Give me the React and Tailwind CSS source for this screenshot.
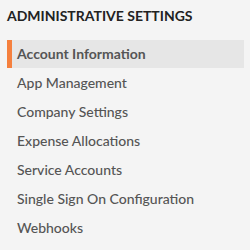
import React from 'react';

const items = [
  'Account Information',
  'App Management',
  'Company Settings',
  'Expense Allocations',
  'Service Accounts',
  'Single Sign On Configuration',
  'Webhooks',
];

export default function App() {
  const active = 0;

  return (
    <div className="w-[250px] h-[250px] bg-[#f4f4f4] pl-[7px] pr-[6px] pt-[8px] font-['Lato',sans-serif] overflow-hidden">
      <h2 className="text-[14px] leading-[16px] font-bold text-[#222] uppercase">
        Administrative Settings
      </h2>
      <ul className="mt-[16px]">
        {items.map((label, i) => {
          const isActive = i === active;
          return (
            <li
              key={label}
              className={
                isActive
                  ? 'h-[28px] mb-[1px] pb-[2px] flex items-center bg-[#e6e6e6] border-l-[5px] border-[#f5803e] pl-[5px] text-[14px] font-bold text-[#555]'
                  : 'h-[29px] pb-[2px] flex items-center pl-[10px] text-[14px] font-medium text-[#555]'
              }
            >
              {label}
            </li>
          );
        })}
      </ul>
    </div>
  );
}
